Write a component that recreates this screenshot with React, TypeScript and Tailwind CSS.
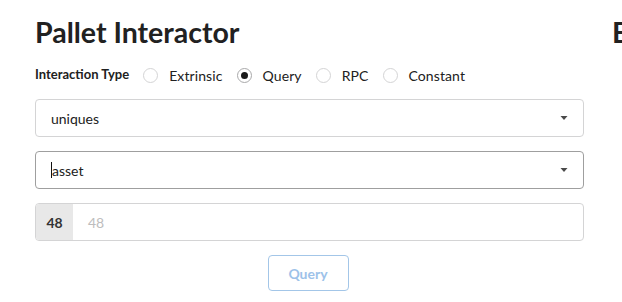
import React from "react";

function Radio({ label, checked }: { label: string; checked?: boolean }) {
  return (
    <div className="flex items-center mr-[14px]">
      <span
        className={
          checked
            ? "w-[15px] h-[15px] rounded-full border border-[#a9a9aa] bg-white flex items-center justify-center"
            : "w-[15px] h-[15px] rounded-full border border-[#d4d4d5] bg-white"
        }
      >
        {checked ? <span className="w-[7px] h-[7px] rounded-full bg-[#1a1a1a]" /> : null}
      </span>
      <span className="ml-[11px] text-[14px] tracking-[0.1px] text-[#212121]">{label}</span>
    </div>
  );
}

function Caret() {
  return (
    <svg width="8" height="4" viewBox="0 0 8 4" className="absolute right-[15px] top-1/2 -translate-y-1/2">
      <path d="M0.5 0 L7.5 0 L4 4 Z" fill="#4a4a4a" />
    </svg>
  );
}

export default function App() {
  return (
    <div
      className="w-[622px] h-[302px] overflow-hidden bg-white"
      style={{ fontFamily: "Lato, 'Open Sans', sans-serif" }}
    >
      <div className="flex gap-[28px] pl-[35px] pt-[14px]">
        <div className="w-[549px] shrink-0">
          <h1 className="text-[28.5px] leading-[36px] font-bold text-[#212121]">Pallet Interactor</h1>
          <div className="mt-[14px] h-[22px] flex items-center">
            <span className="text-[13px] font-bold text-[#212121] mr-[14px]">Interaction Type</span>
            <Radio label="Extrinsic" />
            <Radio label="Query" checked />
            <Radio label="RPC" />
            <Radio label="Constant" />
          </div>
          <div className="mt-[13px] relative h-[38px] rounded-[4px] border border-[#d4d4d5] flex items-center pl-[15px]">
            <span className="text-[14px] text-[#212121]">uniques</span>
            <Caret />
          </div>
          <div className="mt-[14px] relative h-[38px] rounded-[4px] border border-[#9f9f9f] flex items-center pl-[15px]">
            <span className="w-px h-[16px] bg-[#111]" />
            <span className="text-[14px] text-[#212121]">asset</span>
            <Caret />
          </div>
          <div className="mt-[14px] h-[38px] flex rounded-[4px] border border-[#d4d4d5] overflow-hidden">
            <div className="w-[37px] bg-[#e8e8e8] flex items-center justify-center text-[14px] font-bold text-[#333]">
              48
            </div>
            <div className="flex-1 flex items-center pl-[15px] text-[14px] text-[#bdbdbd]">48</div>
          </div>
          <div className="mt-[14px] flex justify-center">
            <button className="ml-[-3px] h-[36px] w-[81px] rounded-[4px] border border-[#a3c6e8] text-[14px] font-bold text-[#9dc2e9] bg-white">
              Query
            </button>
          </div>
        </div>
        <div className="shrink-0 w-[300px]">
          <h1 className="text-[28.5px] leading-[36px] font-bold text-[#212121]">Events</h1>
        </div>
      </div>
    </div>
  );
}
